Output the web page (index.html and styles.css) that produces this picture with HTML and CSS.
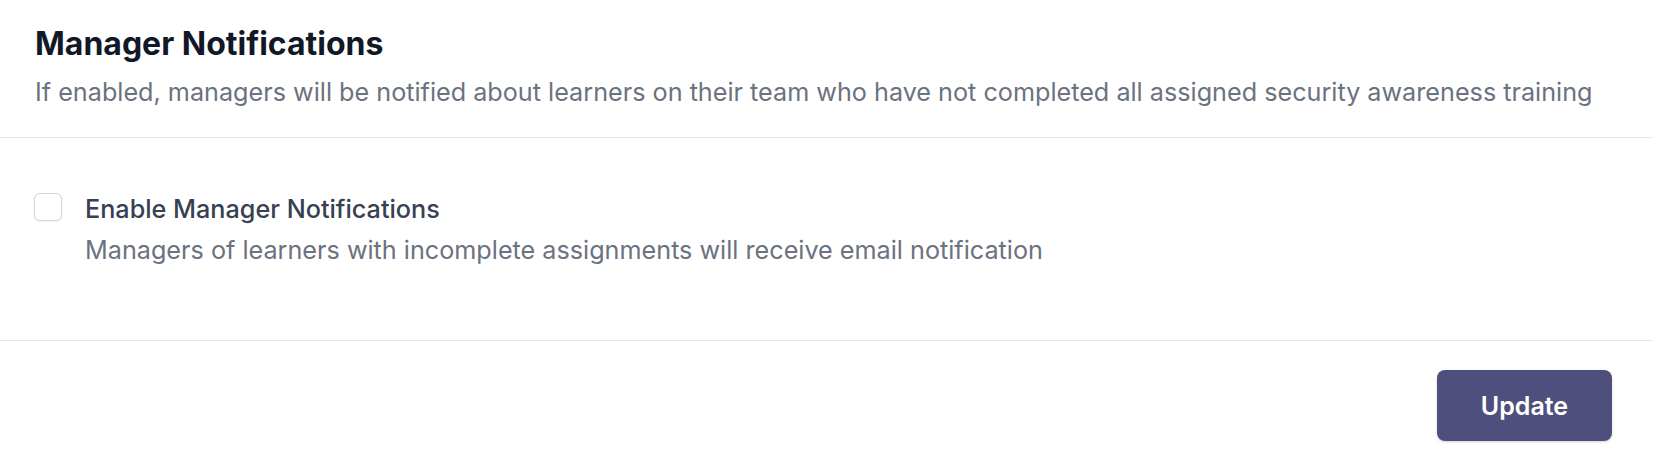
FILE: index.html
```html
<!DOCTYPE html>
<html lang="en">
<head>
<meta charset="utf-8">
<title>Manager Notifications</title>
<link rel="stylesheet" href="styles.css">
</head>
<body>
<div class="card">
  <div class="card-header">
    <h2 class="title">Manager Notifications</h2>
    <p class="subtitle">If enabled, managers will be notified about learners on their team who have not completed all assigned security awareness training</p>
  </div>
  <div class="card-body">
    <label class="option">
      <span class="checkbox"></span>
      <span class="option-text">
        <span class="option-label">Enable Manager Notifications</span>
        <span class="option-desc">Managers of learners with incomplete assignments will receive email notification</span>
      </span>
    </label>
  </div>
  <div class="card-footer">
    <button class="btn" type="button">Update</button>
  </div>
</div>
</body>
</html>
```

FILE: styles.css
```css
* { box-sizing: border-box; }
html, body { margin: 0; padding: 0; background: #ffffff; }
body {
  font-family: Inter, "Noto Sans", "Liberation Sans", sans-serif;
  -webkit-font-smoothing: antialiased;
}
.card {
  width: 100%;
  background: #fff;
}
.card-header {
  padding: 25px 41px 28px 35px;
  border-bottom: 1px solid #e5e7eb;
}
.title {
  margin: 0;
  font-size: 32px;
  line-height: 38px;
  font-weight: 700;
  color: #111827;
}
.subtitle {
  margin: 12px 0 0;
  font-size: 25.2px;
  line-height: 34px;
  color: #6b7280;
  white-space: nowrap;
}
.card-body {
  padding: 51px 41px 73px 34px;
  border-bottom: 1px solid #e5e7eb;
}
.option {
  display: flex;
  align-items: flex-start;
  gap: 23px;
}
.checkbox {
  flex: none;
  width: 28px;
  height: 28px;
  margin-top: 4px;
  border: 1px solid #d1d5db;
  border-radius: 6px;
  background: #fff;
  box-shadow: 0 1px 2px rgba(0,0,0,0.05);
}
.option-text {
  display: flex;
  flex-direction: column;
  gap: 7px;
  padding-top: 3px;
}
.option-label {
  font-size: 25.2px;
  line-height: 34px;
  font-weight: 500;
  color: #374151;
}
.option-desc {
  font-size: 25.2px;
  line-height: 34px;
  color: #6b7280;
}
.card-footer {
  display: flex;
  justify-content: flex-end;
  padding: 29px 41px 29px 35px;
}
.btn {
  width: 175px;
  height: 71px;
  border: none;
  border-radius: 8px;
  background: #4f4f7e;
  color: #fff;
  font-family: inherit;
  font-size: 25px;
  font-weight: 600;
  box-shadow: 0 1px 3px rgba(0,0,0,0.12), 0 1px 2px rgba(0,0,0,0.06);
  cursor: pointer;
}
```
